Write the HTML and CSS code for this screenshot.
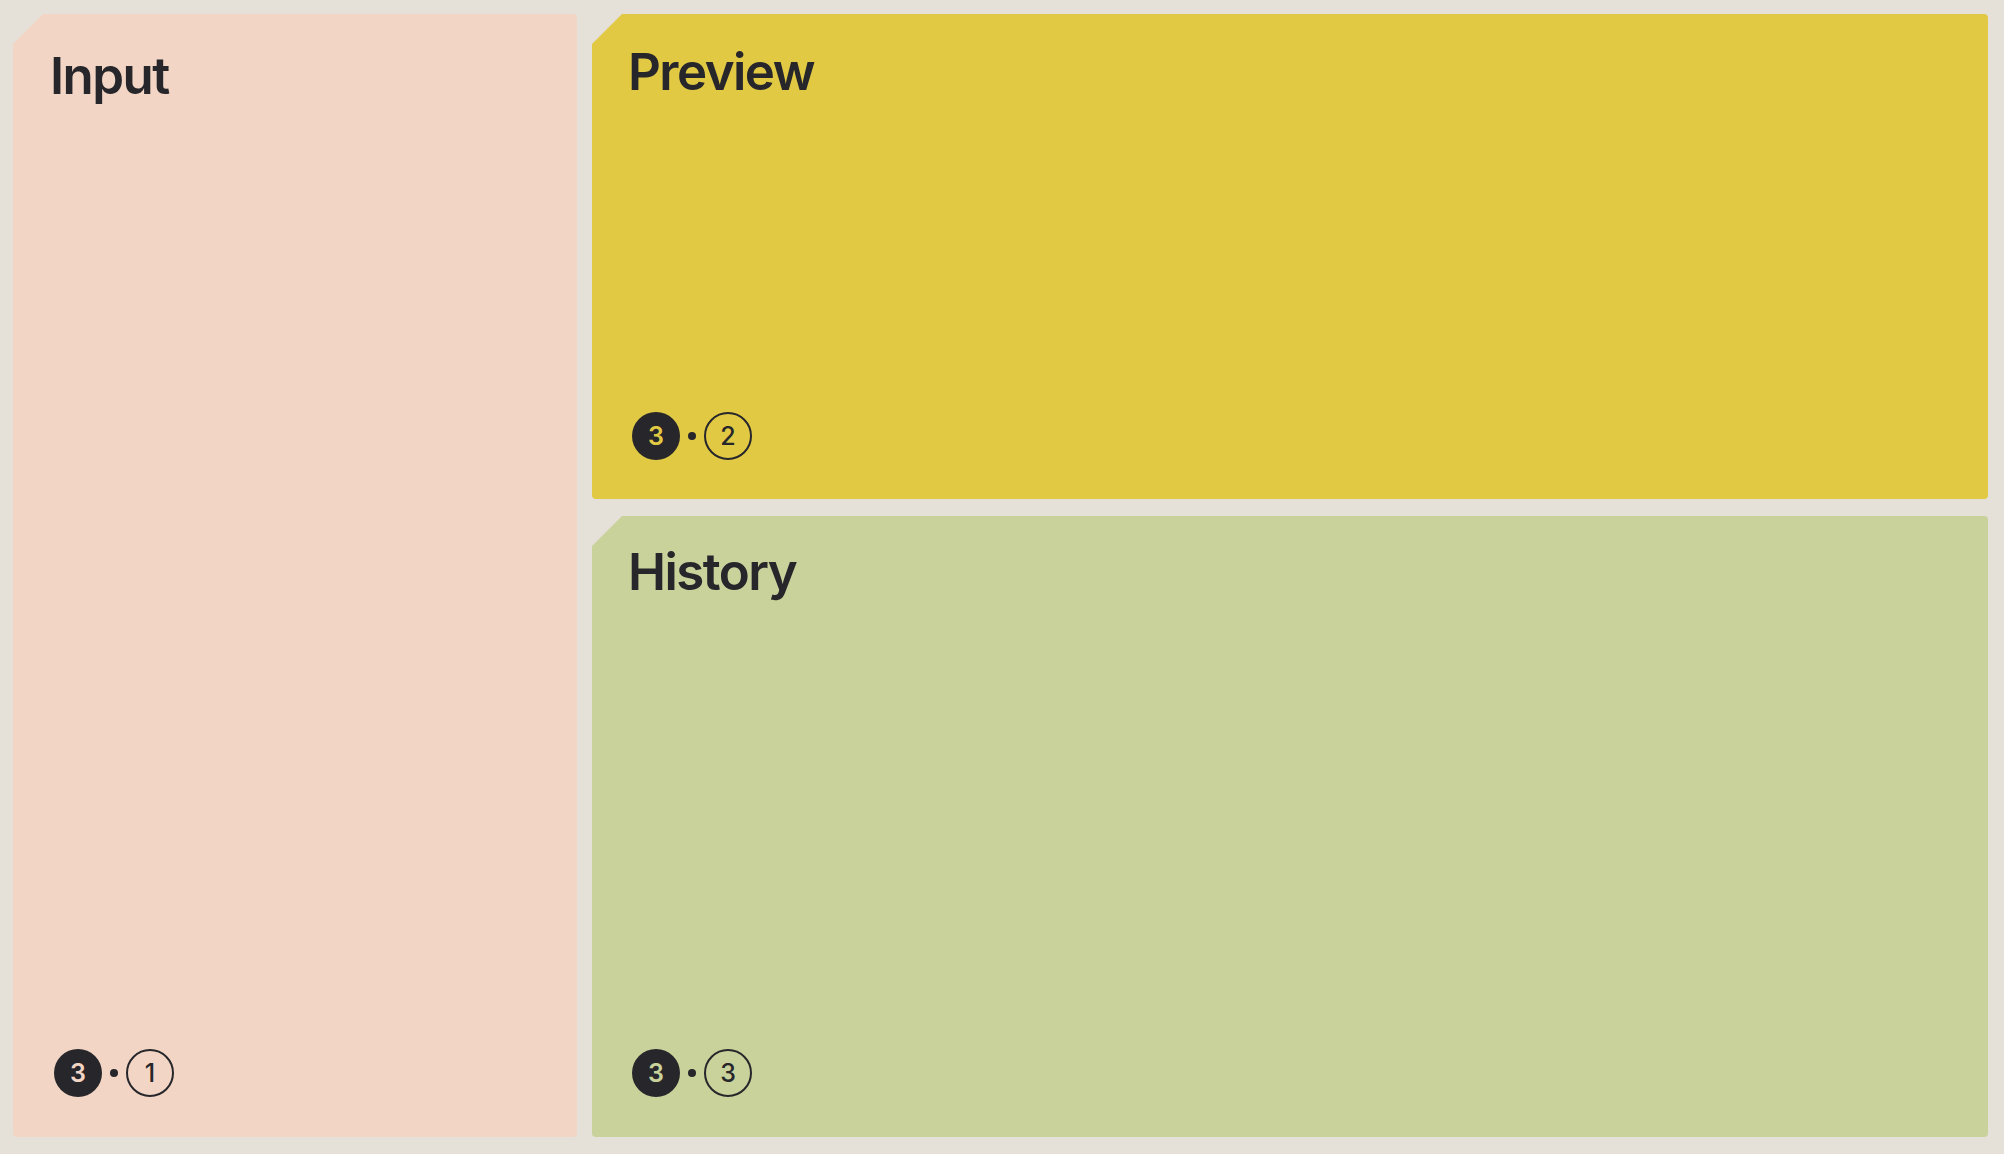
FILE: index.html
```html
<!DOCTYPE html>
<html lang="en">
<head>
<meta charset="utf-8">
<title>Panels</title>
<link rel="stylesheet" href="styles.css">
</head>
<body>
<main class="board">
  <section class="panel panel--input">
    <h1 class="panel__title">Input</h1>
    <div class="badges">
      <span class="badge badge--filled">3</span>
      <span class="badge__dot"></span>
      <span class="badge badge--outline">1</span>
    </div>
  </section>
  <section class="panel panel--preview">
    <h1 class="panel__title">Preview</h1>
    <div class="badges">
      <span class="badge badge--filled">3</span>
      <span class="badge__dot"></span>
      <span class="badge badge--outline">2</span>
    </div>
  </section>
  <section class="panel panel--history">
    <h1 class="panel__title">History</h1>
    <div class="badges">
      <span class="badge badge--filled">3</span>
      <span class="badge__dot"></span>
      <span class="badge badge--outline">3</span>
    </div>
  </section>
</main>
</body>
</html>
```

FILE: styles.css
```css
* { box-sizing: border-box; }

html, body {
  margin: 0;
  height: 100%;
}

body {
  background: #e5e1d9;
  font-family: Inter, "Noto Sans", "Liberation Sans", sans-serif;
  color: #26262b;
}

.board {
  height: 1154px;
  width: 2004px;
  padding: 14px 16px 17px 13px;
  display: grid;
  grid-template-columns: 564px 1fr;
  grid-template-rows: 485px 1fr;
  column-gap: 15px;
  row-gap: 17px;
}

.panel {
  display: flex;
  flex-direction: column;
  justify-content: space-between;
  border-radius: 4px;
  clip-path: polygon(30px 0, 100% 0, 100% 100%, 0 100%, 0 30px);
  padding: 27px 40px 39px 40px;
}

.panel--input {
  grid-row: 1 / span 2;
  background: #f2d5c4;
  padding-top: 31px;
  padding-left: 41px;
  padding-bottom: 40px;
}

.panel--preview {
  background: #e1c944;
}

.panel--history {
  background: #c9d29b;
  padding-top: 25px;
  padding-bottom: 40px;
}

.panel__title {
  margin: 0 0 0 -4px;
  font-size: 51px;
  line-height: 1.2;
  font-weight: 600;
  letter-spacing: -0.03em;
}

.badges {
  display: flex;
  align-items: center;
  gap: 8px;
}

.badge {
  width: 48px;
  height: 48px;
  border-radius: 50%;
  display: flex;
  align-items: center;
  justify-content: center;
  font-size: 25px;
  line-height: 1;
}

.badge--filled {
  background: #26262b;
  font-weight: 600;
}

.panel--input .badge--filled { color: #f2d5c4; }
.panel--preview .badge--filled { color: #e1c944; }
.panel--history .badge--filled { color: #c9d29b; }

.badge--outline {
  border: 2px solid #26262b;
  font-weight: 500;
  color: #26262b;
}

.badge__dot {
  width: 8px;
  height: 8px;
  border-radius: 50%;
  background: #26262b;
}
```
